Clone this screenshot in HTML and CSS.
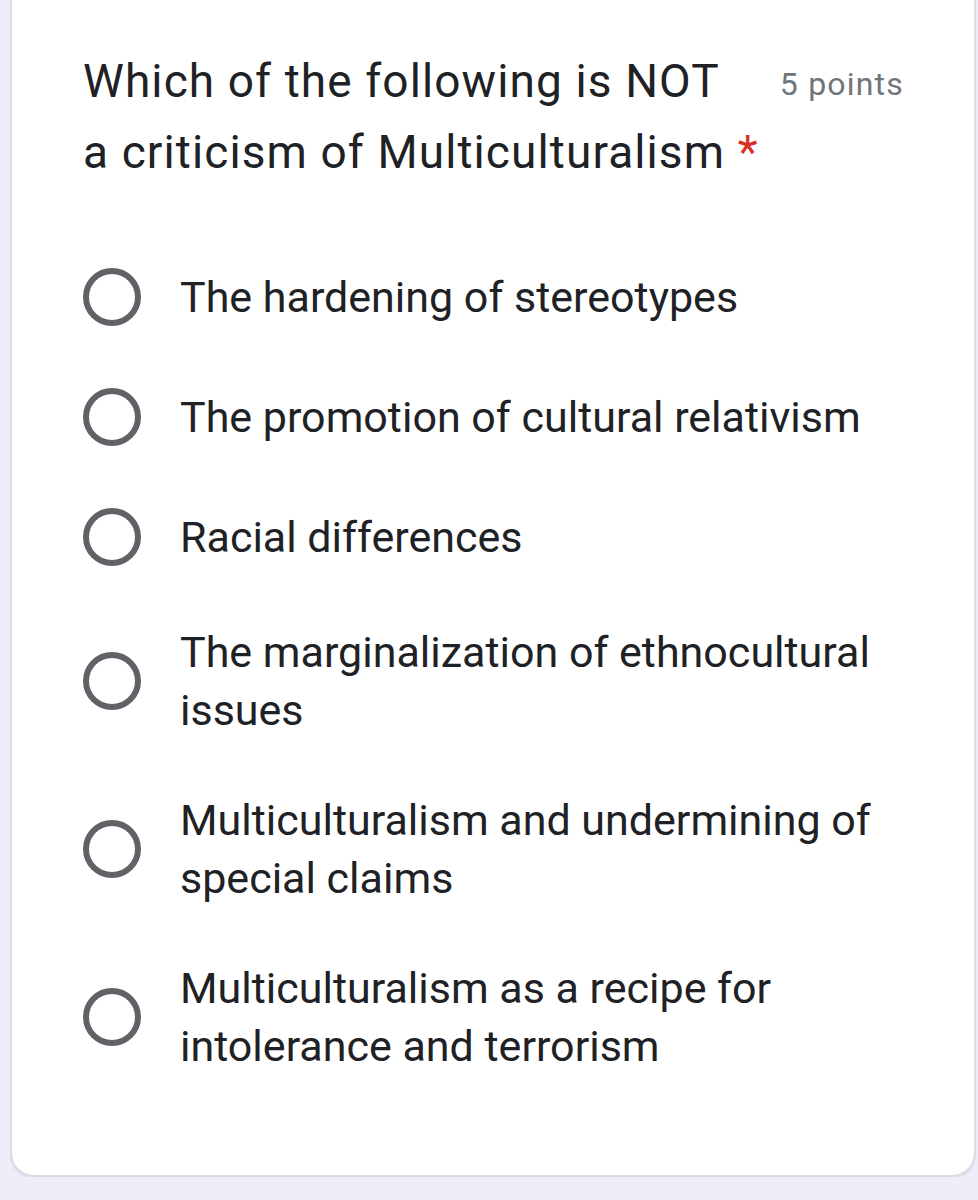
FILE: index.html
```html
<!DOCTYPE html>
<html>
<head>
<meta charset="utf-8">
<link rel="stylesheet" href="styles.css">
</head>
<body>
<div class="card">
  <div class="header">
    <div class="title">Which of the following is NOT<br>a criticism of Multiculturalism&nbsp;<span class="req">*</span></div>
    <div class="points">5 points</div>
  </div>
  <div class="options">
    <div class="option"><span class="radio"></span><span class="label">The hardening of stereotypes</span></div>
    <div class="option"><span class="radio"></span><span class="label">The promotion of cultural relativism</span></div>
    <div class="option"><span class="radio"></span><span class="label">Racial differences</span></div>
    <div class="option"><span class="radio"></span><span class="label">The marginalization of ethnocultural issues</span></div>
    <div class="option"><span class="radio"></span><span class="label">Multiculturalism and undermining of special claims</span></div>
    <div class="option"><span class="radio"></span><span class="label">Multiculturalism as a recipe for intolerance and terrorism</span></div>
  </div>
</div>
</body>
</html>
```
FILE: styles.css
```css
html, body {
  margin: 0;
  padding: 0;
  background: #efedf8;
}
body {
  font-family: Roboto, "Noto Sans", sans-serif;
  color: #202124;
  padding-left: 10px;
  padding-right: 2px;
}
.card {
  background: #fff;
  border: 2px solid #dcdbe3;
  border-top: none;
  border-radius: 0 0 24px 24px;
  box-shadow: 0 2px 2px rgba(0,0,0,0.06);
  padding: 46px 40px 100px 71px;
}
.header {
  display: flex;
  align-items: flex-start;
  justify-content: space-between;
  gap: 20px;
}
.title {
  font-size: 46px;
  line-height: 71px;
  letter-spacing: 1.1px;
  white-space: nowrap;
}
.req {
  color: #d93025;
}
.points {
  font-size: 32px;
  letter-spacing: 1.2px;
  color: #70757a;
  line-height: 71px;
  margin-top: 3px;
  margin-right: 30px;
  white-space: nowrap;
}
.options {
  margin-top: 75px;
  display: flex;
  flex-direction: column;
  gap: 52px;
}
.option {
  display: flex;
  align-items: center;
  min-height: 68px;
}
.radio {
  flex: none;
  width: 46px;
  height: 46px;
  border: 6px solid #5f6368;
  border-radius: 50%;
  margin-right: 39px;
}
.label {
  font-size: 43px;
  line-height: 58px;
  max-width: 710px;
}
```
